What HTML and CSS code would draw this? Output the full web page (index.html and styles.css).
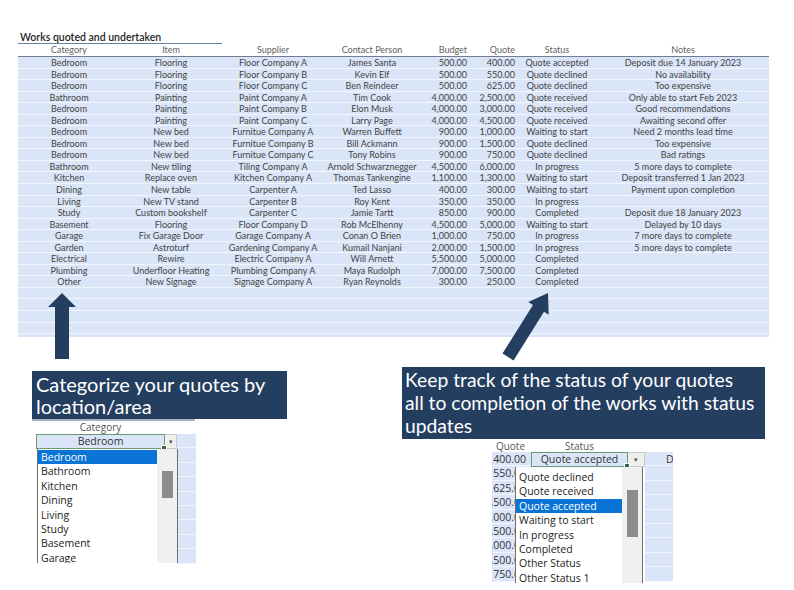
FILE: index.html
```html
<!DOCTYPE html>
<html>
<head>
<meta charset="utf-8">
<link rel="stylesheet" href="styles.css">
</head>
<body>
<div class="page">
  <div class="title">Works quoted and undertaken</div>
  <div class="sheet">
    <div class="hrow">
      <span>Category</span><span>Item</span><span>Supplier</span><span>Contact Person</span><span class="num">Budget</span><span class="num">Quote</span><span>Status</span><span>Notes</span>
    </div>
    <div class="rows">
      <div class="row"><span>Bedroom</span><span>Flooring</span><span>Floor Company A</span><span>James Santa</span><span class="num">500.00</span><span class="num">400.00</span><span>Quote accepted</span><span>Deposit due 14 January 2023</span></div>
      <div class="row"><span>Bedroom</span><span>Flooring</span><span>Floor Company B</span><span>Kevin Elf</span><span class="num">500.00</span><span class="num">550.00</span><span>Quote declined</span><span>No availability</span></div>
      <div class="row"><span>Bedroom</span><span>Flooring</span><span>Floor Company C</span><span>Ben Reindeer</span><span class="num">500.00</span><span class="num">625.00</span><span>Quote declined</span><span>Too expensive</span></div>
      <div class="row"><span>Bathroom</span><span>Painting</span><span>Paint Company A</span><span>Tim Cook</span><span class="num">4,000.00</span><span class="num">2,500.00</span><span>Quote received</span><span>Only able to start Feb 2023</span></div>
      <div class="row"><span>Bedroom</span><span>Painting</span><span>Paint Company B</span><span>Elon Musk</span><span class="num">4,000.00</span><span class="num">3,000.00</span><span>Quote received</span><span>Good recommendations</span></div>
      <div class="row"><span>Bedroom</span><span>Painting</span><span>Paint Company C</span><span>Larry Page</span><span class="num">4,000.00</span><span class="num">4,500.00</span><span>Quote received</span><span>Awaiting second offer</span></div>
      <div class="row"><span>Bedroom</span><span>New bed</span><span>Furnitue Company A</span><span>Warren Buffett</span><span class="num">900.00</span><span class="num">1,000.00</span><span>Waiting to start</span><span>Need 2 months lead time</span></div>
      <div class="row"><span>Bedroom</span><span>New bed</span><span>Furnitue Company B</span><span>Bill Ackmann</span><span class="num">900.00</span><span class="num">1,500.00</span><span>Quote declined</span><span>Too expensive</span></div>
      <div class="row"><span>Bedroom</span><span>New bed</span><span>Furnitue Company C</span><span>Tony Robins</span><span class="num">900.00</span><span class="num">750.00</span><span>Quote declined</span><span>Bad ratings</span></div>
      <div class="row"><span>Bathroom</span><span>New tiling</span><span>Tiling Company A</span><span>Arnold Schwarznegger</span><span class="num">4,500.00</span><span class="num">6,000.00</span><span>In progress</span><span>5 more days to complete</span></div>
      <div class="row"><span>Kitchen</span><span>Replace oven</span><span>Kitchen Company A</span><span>Thomas Tankengine</span><span class="num">1,100.00</span><span class="num">1,300.00</span><span>Waiting to start</span><span>Deposit transferred 1 Jan 2023</span></div>
      <div class="row"><span>Dining</span><span>New table</span><span>Carpenter A</span><span>Ted Lasso</span><span class="num">400.00</span><span class="num">300.00</span><span>Waiting to start</span><span>Payment upon completion</span></div>
      <div class="row"><span>Living</span><span>New TV stand</span><span>Carpenter B</span><span>Roy Kent</span><span class="num">350.00</span><span class="num">350.00</span><span>In progress</span><span></span></div>
      <div class="row"><span>Study</span><span>Custom bookshelf</span><span>Carpenter C</span><span>Jamie Tartt</span><span class="num">850.00</span><span class="num">900.00</span><span>Completed</span><span>Deposit due 18 January 2023</span></div>
      <div class="row"><span>Basement</span><span>Flooring</span><span>Floor Company D</span><span>Rob McElhenny</span><span class="num">4,500.00</span><span class="num">5,000.00</span><span>Waiting to start</span><span>Delayed by 10 days</span></div>
      <div class="row"><span>Garage</span><span>Fix Garage Door</span><span>Garage Company A</span><span>Conan O Brien</span><span class="num">1,000.00</span><span class="num">750.00</span><span>In progress</span><span>7 more days to complete</span></div>
      <div class="row"><span>Garden</span><span>Astroturf</span><span>Gardening Company A</span><span>Kumail Nanjani</span><span class="num">2,000.00</span><span class="num">1,500.00</span><span>In progress</span><span>5 more days to complete</span></div>
      <div class="row"><span>Electrical</span><span>Rewire</span><span>Electric Company A</span><span>Will Arnett</span><span class="num">5,500.00</span><span class="num">5,000.00</span><span>Completed</span><span></span></div>
      <div class="row"><span>Plumbing</span><span>Underfloor Heating</span><span>Plumbing Company A</span><span>Maya Rudolph</span><span class="num">7,000.00</span><span class="num">7,500.00</span><span>Completed</span><span></span></div>
      <div class="row"><span>Other</span><span>New Signage</span><span>Signage Company A</span><span>Ryan Reynolds</span><span class="num">300.00</span><span class="num">250.00</span><span>Completed</span><span></span></div>
      <div class="row"></div>
      <div class="row"></div>
      <div class="row"></div>
      <div class="row"></div>
      <div class="row"></div>
    </div>
  </div>

  <div class="lower">
    <div class="col-left">
      <div class="callout callout-left">Categorize your quotes by location/area</div>
      <div class="callout-shadow"></div>
      <div class="excerpt ex-cat">
        <div class="ex-head">Category</div>
        <div class="ex-row">
          <div class="sel-cell">Bedroom<i class="handle"></i></div>
          <div class="dd-btn">&#9662;</div>
          <div class="side-cells">
            <div></div><div></div><div></div><div></div><div></div><div></div><div></div><div></div><div></div>
          </div>
        </div>
        <div class="dd-list">
          <ul class="dd-items">
            <li class="active">Bedroom</li>
            <li>Bathroom</li>
            <li>Kitchen</li>
            <li>Dining</li>
            <li>Living</li>
            <li>Study</li>
            <li>Basement</li>
            <li>Garage</li>
          </ul>
          <div class="dd-scroll"><div class="thumb"></div></div>
        </div>
      </div>
    </div>

    <div class="col-right">
      <div class="callout callout-right">Keep track of the status of your quotes<br>all to completion of the works with status<br>updates</div>
      <div class="excerpt ex-status">
        <div class="ex-cols">
          <div class="q-col">
            <div class="q-head">Quote</div>
            <div class="q-cell">400.00</div>
            <div class="q-cell">550.00</div>
            <div class="q-cell">625.00</div>
            <div class="q-cell">2,500.00</div>
            <div class="q-cell">3,000.00</div>
            <div class="q-cell">4,500.00</div>
            <div class="q-cell">1,000.00</div>
            <div class="q-cell">1,500.00</div>
            <div class="q-cell">750.00</div>
          </div>
          <div class="s-col">
            <div class="s-head">Status</div>
            <div class="s-row">
              <div class="sel-cell sel-status">Quote accepted<i class="handle"></i></div>
              <div class="dd-btn dd-btn-r">&#9662;</div>
            </div>
          </div>
          <div class="n-col">
            <div class="n-head"></div>
            <div class="n-cell">Deposit due 14 January 2023</div>
            <div class="n-cell"></div>
            <div class="n-cell"></div>
            <div class="n-cell"></div>
            <div class="n-cell"></div>
            <div class="n-cell"></div>
            <div class="n-cell"></div>
            <div class="n-cell"></div>
            <div class="n-cell"></div>
          </div>
        </div>
        <div class="dd-list dd-list-r">
          <ul class="dd-items">
            <li>Quote declined</li>
            <li>Quote received</li>
            <li class="active">Quote accepted</li>
            <li>Waiting to start</li>
            <li>In progress</li>
            <li>Completed</li>
            <li>Other Status</li>
            <li>Other Status 1</li>
          </ul>
          <div class="dd-scroll"><div class="thumb"></div></div>
        </div>
      </div>
    </div>
  </div>

  <svg class="arrows" width="794" height="590" viewBox="0 0 794 590" aria-hidden="true">
    <polygon points="62,293 76,307 69,307 69,359 55,359 55,307 48,307" />
    <polygon points="548,293 548.7,314.7 544,311.7 513.5,360.4 502.5,353.6 533,304.9 528.3,301.9" />
  </svg>
</div>
</body>
</html>
```

FILE: styles.css
```css
* { box-sizing: border-box; }
html, body { margin: 0; padding: 0; background: #ffffff; }
.page {
  position: relative;
  width: 794px;
  height: 590px;
  overflow: hidden;
  padding-top: 31px;
  font-family: Lato, "Noto Sans", sans-serif;
  color: #404040;
}
.title {
  margin-left: 18px;
  width: 204px;
  height: 13px;
  padding-left: 2px;
  font-size: 10.5px;
  line-height: 12px;
  font-weight: 600;
  color: #1e1e1e;
  border-bottom: 1px solid #6a7f99;
}
.sheet {
  margin-left: 18px;
  width: 751px;
  font-size: 9px;
}
.hrow, .row {
  display: grid;
  grid-template-columns: 102px 102px 102px 96px 49px 48px 80px 172px;
  white-space: nowrap;
}
.hrow span, .row span { text-align: center; overflow: visible; }
.hrow .num, .row .num { text-align: right; padding-right: 2px; }
.hrow {
  height: 13px;
  line-height: 12px;
  color: #5f5f5f;
  border-bottom: 1.5px solid #6f7f91;
}
.rows {
  height: 280px;
  overflow: hidden;
  background: #dae6f8;
}
.row {
  height: 11.55px;
  line-height: 11px;
  border-bottom: 1px solid #f2f6fd;
  color: #444;
}

/* lower section */
.lower {
  display: flex;
  align-items: flex-start;
}
.col-left {
  margin-left: 32px;
  margin-top: 34px;
  width: 255px;
}
.col-right {
  margin-left: 115px;
  margin-top: 30px;
  width: 363px;
}
.callout {
  background: #243e60;
  color: #ffffff;
  font-family: Lato, "Noto Sans", sans-serif;
  font-size: 20px;
  line-height: 22px;
  padding: 2px 8px 2px 4px;
}
.callout-left { height: 48px; }
.callout-shadow {
  width: 163px;
  height: 2px;
  background: #a9b3c2;
}
.callout-right {
  height: 72px;
  font-size: 19.3px;
  line-height: 23px;
  padding: 1px 0 0 3px;
  white-space: nowrap;
}

.excerpt {
  position: relative;
  font-family: "Open Sans", "Noto Sans", sans-serif;
  color: #333;
}
.ex-cat { margin-left: 4px; width: 160px; }
.ex-head {
  width: 129px;
  text-align: center;
  font-size: 10px;
  line-height: 13px;
  height: 13px;
  color: #555;
}
.ex-row {
  display: flex;
  align-items: flex-start;
}
.sel-cell {
  position: relative;
  width: 129px;
  height: 15px;
  background: #dae6f8;
  border: 1px solid #6c9a76;
  text-align: center;
  font-size: 10.5px;
  line-height: 13px;
  color: #333;
}
.handle {
  position: absolute;
  right: -3px;
  bottom: -3px;
  width: 4px;
  height: 4px;
  background: #2f6b3f;
  border: 1px solid #ffffff;
  box-sizing: content-box;
}
.dd-btn {
  width: 12px;
  height: 15px;
  background: #efefef;
  border: 1px solid #c9c9c9;
  border-left: none;
  font-size: 7px;
  line-height: 13px;
  text-align: center;
  color: #555;
}
.side-cells {
  width: 19px;
  margin-left: 0;
  background: #dae6f8;
}
.side-cells div {
  height: 14.4px;
  border-bottom: 1px solid #f2f6fd;
}
.dd-list {
  position: absolute;
  left: 1px;
  top: 28px;
  width: 141px;
  height: 114px;
  background: #ffffff;
  border-left: 1px solid #6e6e6e;
  border-right: 1px solid #6e6e6e;
  display: flex;
  overflow: hidden;
}
.dd-items {
  list-style: none;
  margin: 0;
  padding: 1px 0 0 0;
  flex: 1;
}
.dd-items li {
  height: 14.4px;
  line-height: 14px;
  padding-left: 3px;
  font-size: 10.5px;
  color: #222;
  white-space: nowrap;
}
.dd-items li.active {
  background: #0a74d6;
  color: #ffffff;
}
.dd-scroll {
  position: relative;
  width: 20px;
  background: #f0f0f0;
}
.thumb {
  position: absolute;
  left: 5px;
  top: 22px;
  width: 11px;
  height: 27px;
  background: #8c8c8c;
}

/* status excerpt */
.ex-status {
  margin-left: 90px;
  margin-top: 1px;
  width: 181px;
  height: 150px;
}
.ex-cols { display: flex; align-items: flex-start; }
.q-col {
  width: 39px;
  background: linear-gradient(#ffffff 0 12px, #dae6f8 12px);
  overflow: hidden;
}
.q-head, .s-head, .n-head {
  height: 12px;
  line-height: 12px;
  font-size: 10px;
  color: #555;
  white-space: nowrap;
}
.q-head { text-align: right; padding-right: 6px; margin-left: -20px; }
.q-cell {
  height: 14.4px;
  line-height: 14px;
  font-size: 10.5px;
  text-align: right;
  padding-right: 5px;
  white-space: nowrap;
  border-bottom: 1px solid #f2f6fd;
  margin-left: -30px;
  color: #333;
}
.s-col { width: 114px; }
.s-head { text-align: center; width: 97px; }
.s-row { display: flex; }
.sel-status { width: 97px; }
.dd-btn-r { width: 17px; }
.n-col {
  width: 28px;
  overflow: hidden;
}
.n-cell {
  height: 14.4px;
  line-height: 14px;
  font-size: 10.5px;
  padding-left: 21px;
  white-space: nowrap;
  background: #dae6f8;
  border-bottom: 1px solid #f2f6fd;
}
.dd-list-r {
  left: 23px;
  top: 27px;
  width: 128px;
  height: 116px;
}
.dd-list-r .dd-items { padding-top: 3px; }
.dd-list-r .thumb { top: 23px; height: 47px; }

.arrows {
  position: absolute;
  left: 0;
  top: 0;
  pointer-events: none;
}
.arrows polygon { fill: #243e60; }
```
